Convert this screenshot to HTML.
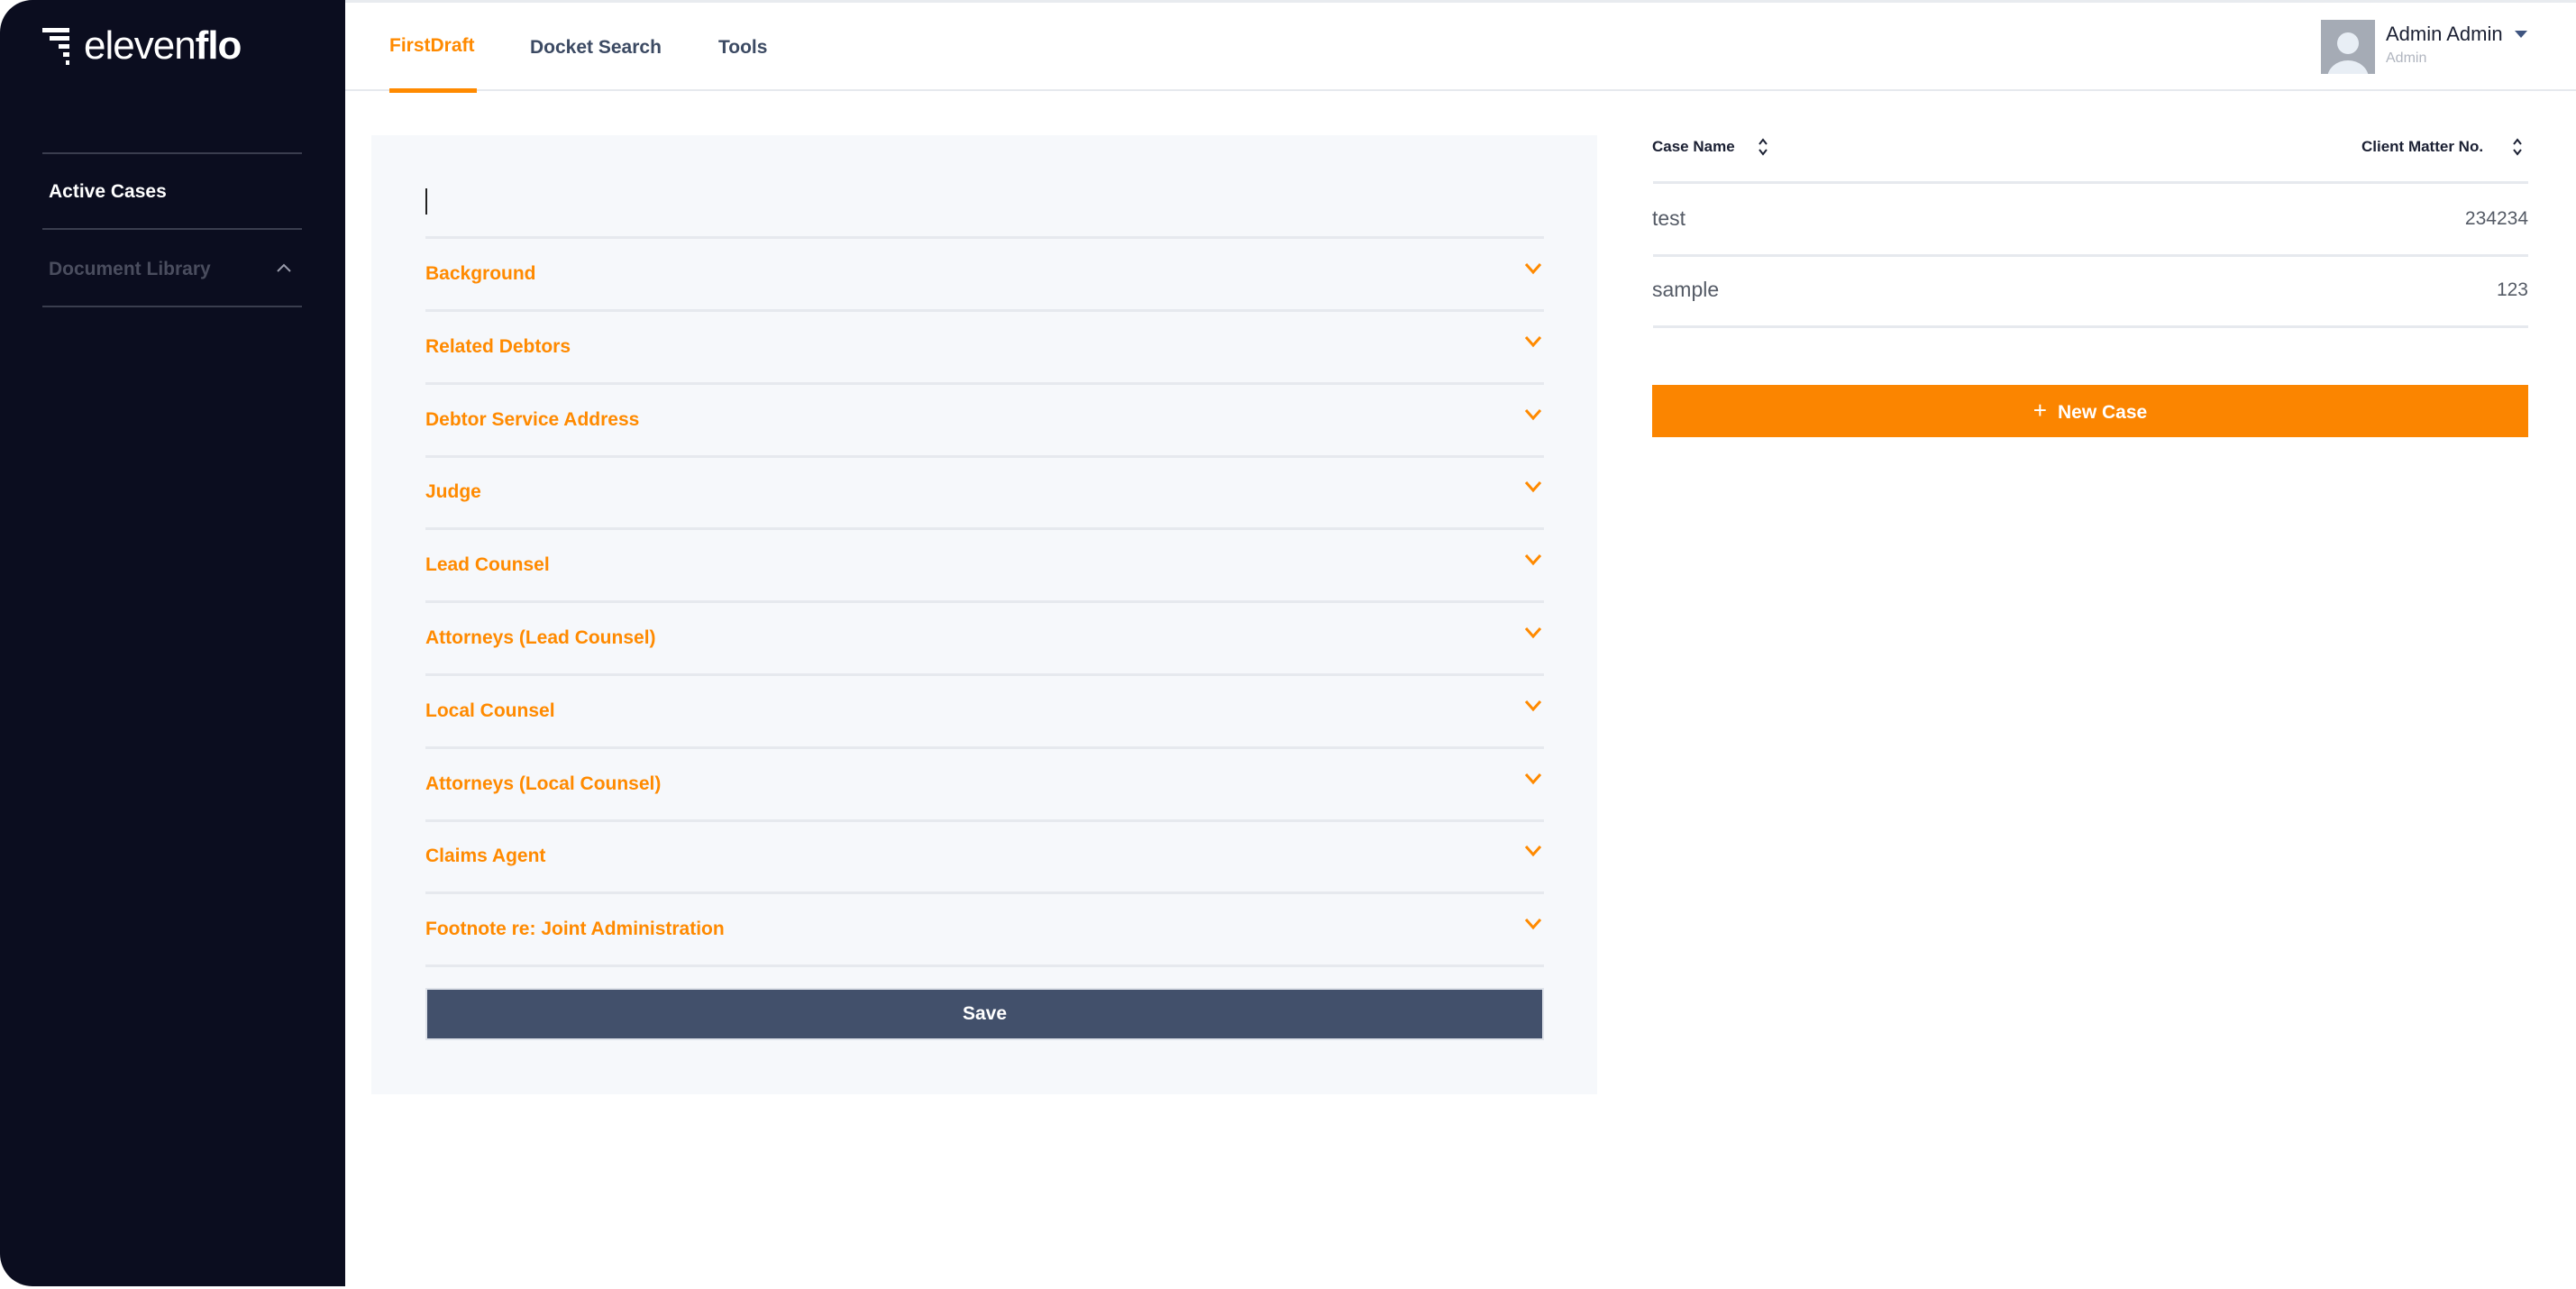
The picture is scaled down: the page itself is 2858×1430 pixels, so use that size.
<!DOCTYPE html>
<html><head><meta charset="utf-8"><style>
*{margin:0;padding:0;box-sizing:border-box}
body{width:2858px;height:1430px;background:#fff;position:relative;overflow:hidden;font-family:"Liberation Sans",sans-serif}
.a{position:absolute}
.sb{left:0;top:0;width:383px;height:1427px;background:#0b0d1f;border-radius:36px 0 0 36px}
.hl{height:2px;background:#3a3d4e;left:47px;width:288px}
.nav{font-size:21px;font-weight:bold;color:#3c4a63;top:41px}
.panel{left:412px;top:150px;width:1360px;height:1064px;background:#f6f8fb}
.row{left:472px;width:1241px;height:81px;border-bottom:3px solid #e6e9ee}
.row span{position:absolute;left:0;top:27px;font-size:21px;font-weight:bold;color:#ff8a00}
.row svg{position:absolute;right:2px;top:26px}
.th{font-size:17px;font-weight:bold;color:#1b2033;top:153px}
.line{left:1834px;width:971px;height:3px;background:#e6e9ee}
.td{font-size:23px;color:#555b66}
</style></head><body>
<div class="a" style="left:383px;top:0;width:2475px;height:3px;background:#e8ebef"></div>
<div class="a sb"></div>
<div class="a" style="left:47px;top:31px;width:30px;height:5px;background:#fff"></div>
<div class="a" style="left:55px;top:40px;width:22px;height:5px;background:#fff"></div>
<div class="a" style="left:65px;top:49px;width:12px;height:5px;background:#fff"></div>
<div class="a" style="left:70px;top:58px;width:7px;height:5px;background:#fff"></div>
<div class="a" style="left:73px;top:67px;width:4px;height:5px;background:#fff"></div>
<div class="a" style="left:93px;top:29px;font-size:44px;color:#fff;letter-spacing:-1px;line-height:1"><span style="font-weight:300">eleven</span><span style="font-weight:bold">flo</span></div>
<div class="a hl" style="top:169px"></div>
<div class="a hl" style="top:253px"></div>
<div class="a hl" style="top:339px"></div>
<div class="a" style="left:54px;top:201px;font-size:21px;font-weight:bold;color:#fff">Active Cases</div>
<div class="a" style="left:54px;top:287px;font-size:21px;font-weight:bold;color:#4a4d5e">Document Library</div>
<svg class="a" style="left:306px;top:291px" width="18" height="12"><path d="M2 10 L9 3 L16 10" stroke="#9a9cab" stroke-width="2" fill="none"/></svg>
<div class="a nav" style="left:432px;color:#ff8a00;top:39px">FirstDraft</div>
<div class="a nav" style="left:588px">Docket Search</div>
<div class="a nav" style="left:797px">Tools</div>
<div class="a" style="left:383px;top:99px;width:2475px;height:2px;background:#e6e9ee"></div>
<div class="a" style="left:432px;top:98px;width:97px;height:5px;background:#ff8a00"></div>
<div class="a" style="left:2575px;top:22px;width:60px;height:60px;background:#a5abb5;overflow:hidden">
 <div class="a" style="left:18px;top:14px;width:24px;height:24px;border-radius:50%;background:#e8eef5"></div>
 <div class="a" style="left:7px;top:45px;width:46px;height:40px;border-radius:50%;background:#e8eef5"></div>
</div>
<div class="a" style="left:2647px;top:25px;font-size:22px;color:#1b2033">Admin Admin</div>
<div class="a" style="left:2647px;top:56px;font-size:16px;color:#b0b5bf">Admin</div>
<svg class="a" style="left:2790px;top:34px" width="14" height="9"><path d="M0 0 L14 0 L7 8Z" fill="#3f5580"/></svg>
<div class="a panel"></div>
<div class="a" style="left:472px;top:209px;width:2px;height:29px;background:#222"></div>
<div class="a" style="left:472px;top:262px;width:1241px;height:3px;background:#e6e9ee"></div>
<div id="rows"></div>
<div class="a" style="left:472px;top:1096px;width:1241px;height:58px;background:#42506b;border:2px solid #dfe3ea;color:#fff;font-weight:bold;font-size:21px;text-align:center;line-height:54px">Save</div>
<div class="a th" style="left:1833px">Case Name</div>
<svg class="a" style="left:1950px;top:152px" width="12" height="22"><path d="M2 8 L6 3 L10 8 M2 14 L6 19 L10 14" stroke="#1b2033" stroke-width="2" fill="none"/></svg>
<div class="a th" style="left:2620px">Client Matter No.</div>
<svg class="a" style="left:2787px;top:152px" width="12" height="22"><path d="M2 8 L6 3 L10 8 M2 14 L6 19 L10 14" stroke="#1b2033" stroke-width="2" fill="none"/></svg>
<div class="a line" style="top:201px"></div>
<div class="a td" style="left:1833px;top:229px">test</div>
<div class="a td" style="right:53px;top:231px;font-size:21px">234234</div>
<div class="a line" style="top:282px"></div>
<div class="a td" style="left:1833px;top:308px">sample</div>
<div class="a td" style="right:53px;top:310px;font-size:21px">123</div>
<div class="a line" style="top:361px"></div>
<div class="a" style="left:1833px;top:427px;width:972px;height:58px;background:#fb8500;color:#fff;font-weight:bold;font-size:21px;text-align:center;line-height:56px"><span style="font-weight:300;font-size:26px;margin-right:12px">+</span>New Case</div>
<script>
var L=["Background","Related Debtors","Debtor Service Address","Judge","Lead Counsel","Attorneys (Lead Counsel)","Local Counsel","Attorneys (Local Counsel)","Claims Agent","Footnote re: Joint Administration"];
var h="";for(var i=0;i<L.length;i++){var t=265+i*80.8;h+='<div class="a row" style="top:'+t+'px"><span>'+L[i]+'</span><svg width="20" height="14"><path d="M2 2 L10 11 L18 2" stroke="#ff8a00" stroke-width="3" fill="none"/></svg></div>';}
document.getElementById("rows").innerHTML=h;
</script>
</body></html>
